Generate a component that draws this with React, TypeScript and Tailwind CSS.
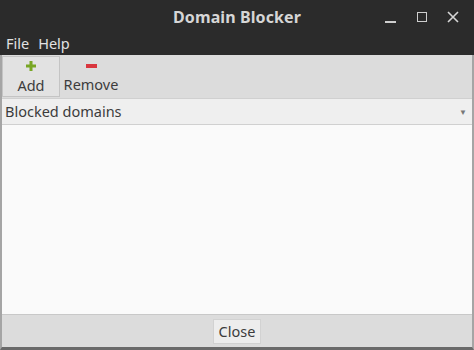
import React from "react";

export default function App() {
  const font = { fontFamily: '"Noto Sans", "Open Sans", sans-serif' };
  return (
    <div className="w-[474px] h-[350px] flex flex-col bg-[#2b2b2b] overflow-hidden" style={font}>
      {/* title bar */}
      <div className="relative h-[33px] flex items-center justify-center shrink-0">
        <span className="text-[16px] font-bold text-[#d6d6d6] tracking-[0.1px]">Domain Blocker</span>
        <div className="absolute right-0 top-0 h-[33px] flex items-center">
          <div className="w-[31px] h-[33px] flex items-center justify-center">
            <div className="w-[11px] h-[2px] bg-[#cfcfcf] mt-[10px]" />
          </div>
          <div className="w-[31px] h-[33px] flex items-center justify-center">
            <div className="w-[10px] h-[10px] border-[1.5px] border-[#cfcfcf]" />
          </div>
          <div className="w-[31px] h-[33px] flex items-center justify-center mr-[6px]">
            <svg width="12" height="12" viewBox="0 0 12 12">
              <path d="M1 1L11 11M11 1L1 11" stroke="#d6d6d6" strokeWidth="1.6" />
            </svg>
          </div>
        </div>
      </div>
      {/* menu bar */}
      <div className="h-[22px] flex items-center text-[14.5px] text-[#e2e2e2] shrink-0">
        <span className="ml-[6px]">File</span>
        <span className="ml-[9px]">Help</span>
      </div>
      {/* body */}
      <div className="flex-1 flex flex-col bg-[#dcdcdc] border-x-2 border-b-[3px] border-x-[#a5a5a5] border-b-[#6a6a6a]">
        {/* toolbar */}
        <div className="h-[43px] flex items-stretch pt-[1px] pb-[1px] shrink-0">
          <div className="w-[58px] flex flex-col items-center border border-[#c4c4c4] bg-[#e2e2e2] ml-0">
            <svg width="10" height="10" viewBox="0 0 10 10" className="mt-[4px]">
              <path d="M3.5 0h3v3.5h3.5v3h-3.5v3.5h-3v-3.5h-3.5v-3h3.5z" fill="#78a624" />
            </svg>
            <span className="text-[14.5px] text-[#3c3c3c] leading-[20px] mt-[4px]">Add</span>
          </div>
          <div className="w-[62px] flex flex-col items-center">
            <div className="w-[11px] h-[4px] bg-[#d9363e] mt-[8px]" />
            <span className="text-[14.5px] text-[#3c3c3c] leading-[20px] mt-[6px]">Remove</span>
          </div>
        </div>
        {/* header */}
        <div className="h-[27px] flex items-center justify-between bg-[#efefef] border-y border-[#d0d0d0] shrink-0">
          <span className="text-[14.5px] text-[#3c3c3c] ml-[3px]">Blocked domains</span>
          <span className="text-[8px] text-[#777] mr-[5px]">▼</span>
        </div>
        {/* list */}
        <div className="flex-1 bg-[#fafafa] border-b border-[#c8c8c8]" />
        {/* bottom */}
        <div className="h-[32px] flex items-center justify-center shrink-0">
          <div className="w-[48px] h-[25px] mt-[1px] flex items-center justify-center bg-[#ededed] border border-[#d2d2d2] text-[14.5px] text-[#3c3c3c]">
            Close
          </div>
        </div>
      </div>
    </div>
  );
}
